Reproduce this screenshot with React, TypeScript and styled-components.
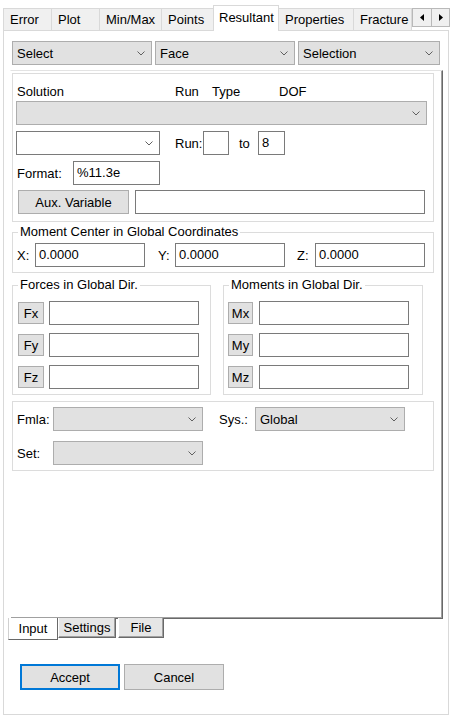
import React from "react";
import styled, { createGlobalStyle } from "styled-components";

const GlobalStyle = createGlobalStyle`
  html, body {
    margin: 0;
    padding: 0;
    background: #fff;
  }
  body {
    font-family: "Liberation Sans", Arial, sans-serif;
    font-size: 13px;
    color: #000;
  }
  * {
    box-sizing: border-box;
  }
`;

const Window = styled.div`
  width: 455px;
  height: 723px;
  padding: 5px 0 0 3px;
  background: #fff;
  line-height: 15px;
`;

const TabStrip = styled.div`
  display: flex;
  align-items: flex-end;
  height: 25px;
  position: relative;
  z-index: 1;
`;

const TopTab = styled.div<{ $w: number; $active?: boolean; $first?: boolean }>`
  width: ${(p) => p.$w}px;
  height: ${(p) => (p.$active ? 26 : 22)}px;
  margin-bottom: ${(p) => (p.$active ? -1 : 0)}px;
  margin-left: ${(p) => (p.$active ? -2 : 0)}px;
  padding: ${(p) => (p.$active ? "4px 0 0 5px" : "3px 0 0 6px")};
  background: ${(p) => (p.$active ? "#fff" : "#f0f0f0")};
  border-top: 1px solid #d9d9d9;
  border-right: 1px solid #d9d9d9;
  border-left: ${(p) => (p.$first || p.$active ? "1px solid #d9d9d9" : "none")};
  white-space: nowrap;
  overflow: hidden;
`;

const Scroller = styled.div`
  display: flex;
  margin-bottom: 3px;
  border: 1px solid #b9b9b9;
`;

const ArrowButton = styled.div`
  width: 18px;
  height: 17px;
  display: flex;
  align-items: center;
  justify-content: center;
  background: #f0f0f0;
  & + & {
    border-left: 1px solid #b9b9b9;
  }
`;

const TabPage = styled.div`
  width: 446px;
  height: 685px;
  border: 1px solid #d9d9d9;
  padding: 10px 0 0 6px;
  display: flex;
  flex-direction: column;
  align-items: flex-start;
`;

const SelectRow = styled.div`
  display: grid;
  grid-template-columns: 140px 140px 142px;
  gap: 3px;
  margin-left: 2px;
`;

const Combo = styled.div<{ $w?: number; $white?: boolean }>`
  display: flex;
  align-items: center;
  justify-content: space-between;
  width: ${(p) => (p.$w ? `${p.$w}px` : "auto")};
  height: 24px;
  padding: 0 6px 0 4px;
  background: ${(p) => (p.$white ? "#fff" : "#e1e1e1")};
  border: 1px solid ${(p) => (p.$white ? "#7a7a7a" : "#adadad")};
`;

const InnerPanel = styled.div`
  margin-top: 5px;
  width: 433px;
  height: 549px;
  border-top: 1px solid #e3e3e3;
  border-left: 1px solid #fff;
  border-right: 1px solid #696969;
  border-bottom: 1px solid #696969;
  box-shadow: inset -1px -1px 0 #a0a0a0;
  padding: 2px 0 0 1px;
  display: flex;
  flex-direction: column;
  align-items: flex-start;
`;

const Group = styled.div<{ $w: number; $h: number; $mt?: number }>`
  position: relative;
  width: ${(p) => p.$w}px;
  height: ${(p) => p.$h}px;
  margin-top: ${(p) => p.$mt ?? 0}px;
  border: 1px solid #dcdcdc;
  display: flex;
  flex-direction: column;
  align-items: flex-start;
`;

const Legend = styled.span`
  position: absolute;
  top: -9px;
  left: 5px;
  padding: 0 2px;
  background: #fff;
  white-space: nowrap;
`;

const SolutionBody = styled.div`
  padding: 10px 0 0 3px;
  display: flex;
  flex-direction: column;
  align-items: flex-start;
`;

const HeaderRow = styled.div`
  display: flex;
  height: 17px;
  margin-left: 1px;
`;

const HeaderCell = styled.span<{ $w?: number }>`
  width: ${(p) => (p.$w ? `${p.$w}px` : "auto")};
`;

const Row = styled.div<{ $mt?: number; $ml?: number }>`
  display: flex;
  align-items: center;
  margin-top: ${(p) => p.$mt ?? 0}px;
  margin-left: ${(p) => p.$ml ?? 0}px;
`;

const Label = styled.span<{ $w: number; $ml?: number }>`
  width: ${(p) => p.$w}px;
  margin-left: ${(p) => p.$ml ?? 0}px;
  white-space: nowrap;
`;

const TextBox = styled.div<{ $w: number; $ml?: number }>`
  width: ${(p) => p.$w}px;
  height: 24px;
  margin-left: ${(p) => p.$ml ?? 0}px;
  padding: 3px 0 0 3px;
  background: #fff;
  border: 1px solid #7a7a7a;
`;

const PushButton = styled.div<{ $w: number; $h?: number; $ml?: number }>`
  width: ${(p) => p.$w}px;
  height: ${(p) => p.$h ?? 24}px;
  margin-left: ${(p) => p.$ml ?? 0}px;
  display: flex;
  align-items: center;
  justify-content: center;
  background: #e1e1e1;
  border: 1px solid #adadad;
`;

const GroupPair = styled.div`
  display: flex;
  gap: 12px;
  margin-top: 12px;
`;

const GroupBody = styled.div<{ $pt: number; $pl: number }>`
  padding: ${(p) => p.$pt}px 0 0 ${(p) => p.$pl}px;
  display: flex;
  flex-direction: column;
  gap: 8px;
`;

const BottomTabs = styled.div`
  display: flex;
  align-items: flex-start;
  margin: -1px 0 0 -2px;
`;

const BottomTab = styled.div<{ $w: number; $active?: boolean; $ml?: number }>`
  width: ${(p) => p.$w}px;
  height: ${(p) => (p.$active ? 22 : 20)}px;
  margin-left: ${(p) => p.$ml ?? 0}px;
  display: flex;
  align-items: center;
  justify-content: center;
  background: ${(p) => (p.$active ? "#fff" : "#e6e6e6")};
  border-left: 1px solid ${(p) => (p.$active ? "#d0d0d0" : "#fff")};
  border-right: 1px solid #696969;
  border-bottom: 1px solid #696969;
  box-shadow: ${(p) => (p.$active ? "none" : "inset -1px -1px 0 #a0a0a0")};
`;

const ButtonRow = styled.div`
  display: flex;
  gap: 4px;
  margin: 24px 0 0 10px;
`;

const DialogButton = styled.div<{ $default?: boolean }>`
  width: 100px;
  height: 26px;
  display: flex;
  align-items: center;
  justify-content: center;
  background: #e1e1e1;
  border: ${(p) => (p.$default ? "2px solid #0078d7" : "1px solid #adadad")};
`;

const Chevron = () => (
  <svg width="8" height="5" viewBox="0 0 8 5">
    <polyline points="0.5,0.5 4,4 7.5,0.5" fill="none" stroke="#606060" strokeWidth="1" />
  </svg>
);

const Dropdown = ({ w, white, value }: { w?: number; white?: boolean; value?: string }) => (
  <Combo $w={w} $white={white}>
    <span>{value ?? ""}</span>
    <Chevron />
  </Combo>
);

const tabs = [
  { label: "Error", w: 49 },
  { label: "Plot", w: 48 },
  { label: "Min/Max", w: 62 },
  { label: "Points", w: 53 },
  { label: "Resultant", w: 66, active: true },
  { label: "Properties", w: 75 },
  { label: "Fracture", w: 58 },
];

export default function App() {
  return (
    <>
      <GlobalStyle />
      <Window>
        <TabStrip>
          {tabs.map((t, i) => (
            <TopTab key={t.label} $w={t.w} $active={t.active} $first={i === 0}>
              {t.label}
            </TopTab>
          ))}
          <Scroller>
            <ArrowButton>
              <svg width="4" height="7" viewBox="0 0 4 7">
                <polygon points="4,0 0,3.5 4,7" fill="#000" />
              </svg>
            </ArrowButton>
            <ArrowButton>
              <svg width="4" height="7" viewBox="0 0 4 7">
                <polygon points="0,0 4,3.5 0,7" fill="#000" />
              </svg>
            </ArrowButton>
          </Scroller>
        </TabStrip>

        <TabPage>
          <SelectRow>
            <Dropdown value="Select" />
            <Dropdown value="Face" />
            <Dropdown value="Selection" />
          </SelectRow>

          <InnerPanel>
            <Group $w={422} $h={149}>
              <SolutionBody>
                <HeaderRow>
                  <HeaderCell $w={158}>Solution</HeaderCell>
                  <HeaderCell $w={37}>Run</HeaderCell>
                  <HeaderCell $w={67}>Type</HeaderCell>
                  <HeaderCell>DOF</HeaderCell>
                </HeaderRow>
                <Dropdown w={411} />
                <Row $mt={6}>
                  <Dropdown w={144} white />
                  <Label $w={28} $ml={15}>Run:</Label>
                  <TextBox $w={26} />
                  <Label $w={19} $ml={10}>to</Label>
                  <TextBox $w={27}>8</TextBox>
                </Row>
                <Row $mt={6} $ml={1}>
                  <Label $w={56}>Format:</Label>
                  <TextBox $w={87}>%11.3e</TextBox>
                </Row>
                <Row $mt={5} $ml={2}>
                  <PushButton $w={111}>Aux. Variable</PushButton>
                  <TextBox $w={290} $ml={6} />
                </Row>
              </SolutionBody>
            </Group>

            <Group $w={422} $h={41} $mt={10}>
              <Legend>Moment Center in Global Coordinates</Legend>
              <Row $mt={10} $ml={4}>
                <Label $w={18}>X:</Label>
                <TextBox $w={110}>0.0000</TextBox>
                <Label $w={17} $ml={13}>Y:</Label>
                <TextBox $w={110}>0.0000</TextBox>
                <Label $w={18} $ml={12}>Z:</Label>
                <TextBox $w={110}>0.0000</TextBox>
              </Row>
            </Group>

            <GroupPair>
              <Group $w={199} $h={110}>
                <Legend>Forces in Global Dir.</Legend>
                <GroupBody $pt={15} $pl={5}>
                  {["Fx", "Fy", "Fz"].map((f) => (
                    <Row key={f}>
                      <PushButton $w={26} $h={22}>{f}</PushButton>
                      <TextBox $w={150} $ml={5} />
                    </Row>
                  ))}
                </GroupBody>
              </Group>
              <Group $w={200} $h={110}>
                <Legend>Moments in Global Dir.</Legend>
                <GroupBody $pt={15} $pl={4}>
                  {["Mx", "My", "Mz"].map((m) => (
                    <Row key={m}>
                      <PushButton $w={25} $h={22}>{m}</PushButton>
                      <TextBox $w={150} $ml={6} />
                    </Row>
                  ))}
                </GroupBody>
              </Group>
            </GroupPair>

            <Group $w={422} $h={70} $mt={6}>
              <Row $mt={5} $ml={4}>
                <Label $w={36}>Fmla:</Label>
                <Dropdown w={150} />
                <Label $w={36} $ml={16}>Sys.:</Label>
                <Dropdown w={150} value="Global" />
              </Row>
              <Row $mt={10} $ml={4}>
                <Label $w={36}>Set:</Label>
                <Dropdown w={150} />
              </Row>
            </Group>
          </InnerPanel>

          <BottomTabs>
            <BottomTab $w={50} $active>Input</BottomTab>
            <BottomTab $w={58}>Settings</BottomTab>
            <BottomTab $w={46} $ml={2}>File</BottomTab>
          </BottomTabs>

          <ButtonRow>
            <DialogButton $default>Accept</DialogButton>
            <DialogButton>Cancel</DialogButton>
          </ButtonRow>
        </TabPage>
      </Window>
    </>
  );
}
